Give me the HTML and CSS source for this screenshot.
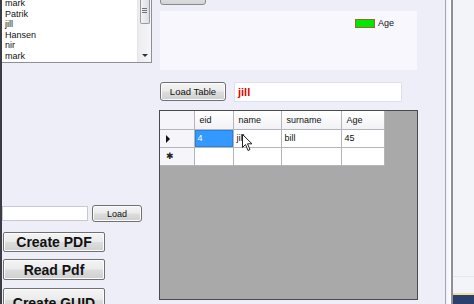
FILE: index.html
```html
<!DOCTYPE html>
<html>
<head>
<meta charset="utf-8">
<link rel="stylesheet" href="styles.css">
</head>
<body>
<div class="edge"></div>
<div class="left">
  <div class="listbox">
    <ul class="items">
      <li>mark</li>
      <li>Patrik</li>
      <li>jill</li>
      <li>Hansen</li>
      <li>nir</li>
      <li>mark</li>
    </ul>
    <div class="vscroll">
      <div class="thumb"><span></span><span></span><span></span></div>
      <div class="arrow-down"></div>
    </div>
  </div>
  <div class="load-row">
    <div class="textbox small"></div>
    <button class="btn load">Load</button>
  </div>
  <button class="btn big first">Create PDF</button>
  <button class="btn big second">Read Pdf</button>
  <button class="btn big third">Create GUID</button>
</div>
<div class="mid">
  <div class="stub"></div>
  <div class="chart">
    <div class="legend"><span class="swatch"></span><span>Age</span></div>
  </div>
  <div class="table-row">
    <button class="btn loadtable">Load Table</button>
    <div class="textbox name">jill</div>
  </div>
  <div class="grid">
    <table>
      <tr class="head">
        <th class="rh"></th><th class="c1">eid</th><th class="c2">name</th><th class="c3">surname</th><th class="c4">Age</th>
      </tr>
      <tr>
        <td class="rh"><span class="tri"></span></td><td class="sel">4</td><td>jill</td><td>bill</td><td>45</td>
      </tr>
      <tr>
        <td class="rh star">&#10033;</td><td></td><td></td><td></td><td></td>
      </tr>
    </table>
    <svg class="cursor" width="12" height="18" viewBox="0 0 12 18">
      <path d="M0.5 0.5 L0.5 13.5 L3.5 10.5 L6 16.5 L8 15.5 L5.5 9.8 L10 9.8 Z" fill="#fff" stroke="#222" stroke-width="1" stroke-linejoin="round"/>
    </svg>
  </div>
</div>
<div class="divider"></div>
<div class="strip">
  <div class="strip-fill"></div>
  <div class="strip-foot"></div>
</div>
</body>
</html>
```
FILE: styles.css
```css
* { box-sizing: border-box; }
html, body { margin: 0; padding: 0; }
body {
  width: 474px;
  height: 304px;
  overflow: hidden;
  display: flex;
  background: #eeeef8;
  font-family: "Liberation Sans", Arial, sans-serif;
  font-size: 9px;
  color: #111;
}
.edge {
  width: 2px;
  flex: none;
  background: #3c3c44;
}
.left {
  width: 150px;
  flex: none;
  display: flex;
  flex-direction: column;
}
.left > * { flex: none; }
.listbox {
  margin-top: -2px;
  height: 65px;
  background: #fff;
  border: 1px solid #8c8f98;
  border-top: none;
  border-left: none;
  display: flex;
}
.items {
  list-style: none;
  margin: 0;
  padding: 0 0 0 3px;
  flex: 1;
}
.items li {
  line-height: 10.5px;
  height: 10.5px;
  font-size: 9px;
  color: #111;
}
.vscroll {
  width: 14px;
  background: linear-gradient(to right, #ececf0, #f6f6f8);
  border-left: 1px solid #e4e4ea;
  position: relative;
  display: flex;
  flex-direction: column;
  align-items: center;
}
.thumb {
  width: 10px;
  height: 26px;
  margin-top: 0;
  border: 1px solid #9a9aa4;
  border-top: none;
  border-radius: 0 0 2px 2px;
  background: linear-gradient(to right, #f4f4f6, #dcdce2);
  display: flex;
  flex-direction: column;
  align-items: center;
  justify-content: center;
  gap: 1px;
}
.thumb span {
  width: 5px;
  height: 1px;
  background: #707078;
}
.arrow-down {
  margin-top: auto;
  margin-bottom: 5px;
  width: 0;
  height: 0;
  border-left: 3px solid transparent;
  border-right: 3px solid transparent;
  border-top: 3px solid #333;
}
.load-row {
  margin-top: 142px;
  height: 17px;
  display: flex;
  align-items: center;
  gap: 4px;
}
.textbox {
  background: #fff;
  border: 1px solid #c8c8d4;
}
.textbox.small {
  width: 86px;
  height: 15px;
}
.btn {
  font-family: "Liberation Sans", Arial, sans-serif;
  color: #111;
  padding: 0;
  border: 1px solid #707070;
  border-radius: 3px;
  background: linear-gradient(to bottom, #f4f4f4 0%, #ebebeb 48%, #dddddd 52%, #cfcfcf 100%);
  box-shadow: inset 0 0 0 1px #fcfcfc;
}
.btn.load {
  width: 50px;
  height: 17px;
  font-size: 9px;
}
.btn.big {
  margin-left: 1px;
  width: 102px;
  font-size: 14px;
  font-weight: bold;
  line-height: 1;
  border-radius: 2px;
}
.btn.first { margin-top: 10px; height: 20px; }
.btn.second { margin-top: 7px; height: 21px; }
.btn.third { margin-top: 8px; height: 24px; padding-top: 5px; }

.mid {
  margin-left: 7px;
  width: 259px;
  flex: none;
  display: flex;
  flex-direction: column;
}
.mid > * { flex: none; }
.stub {
  margin-left: 1px;
  margin-top: -10px;
  width: 46px;
  height: 15px;
  border: 1px solid #8a8a92;
  border-radius: 3px;
  background: linear-gradient(to bottom, #ececec, #d4d4d4);
}
.chart {
  margin-top: 6px;
  margin-left: 1px;
  width: 257px;
  height: 59px;
  background: #f7f7fd;
  display: flex;
  justify-content: flex-end;
}
.legend {
  margin-top: 7px;
  margin-right: 23px;
  display: flex;
  align-items: center;
  gap: 3px;
  height: 10px;
  font-size: 9px;
}
.swatch {
  width: 20px;
  height: 9px;
  background: #00e800;
  border: 1px solid #9a6a2a;
}
.table-row {
  margin-top: 12px;
  margin-left: 1px;
  height: 20px;
  display: flex;
  gap: 8px;
}
.btn.loadtable {
  width: 66px;
  height: 19px;
  font-size: 9.5px;
}
.textbox.name {
  width: 168px;
  height: 20px;
  border-color: #e0e0ea;
  color: #e00000;
  font-weight: bold;
  font-size: 11px;
  line-height: 18px;
  padding-left: 3px;
}
.grid {
  position: relative;
  margin-top: 8px;
  width: 259px;
  height: 190px;
  background: #a9a9a9;
  border: 1px solid #4a4a4a;
}
.grid table {
  border-collapse: collapse;
  font-size: 9px;
}
.grid th, .grid td {
  height: 18px;
  padding: 0 0 0 3px;
  text-align: left;
  font-weight: normal;
  border: 1px solid #b4b4bc;
  background: #fff;
  vertical-align: middle;
}
.grid tr.head th {
  background: linear-gradient(to bottom, #ffffff, #f2f2f6);
  border-top: none;
  padding-left: 5px;
}
.grid .rh {
  width: 34px;
  background: #f6f6fa;
  border-left: none;
  padding-left: 6px;
}
.grid tr.head th.rh { background: #f6f6fa; }
.c1 { width: 39px; }
.c2 { width: 48px; }
.c3 { width: 60px; }
.c4 { width: 43px; }
.grid td.sel {
  background: #3399ff;
  color: #fff;
  box-shadow: inset 0 0 0 1px #2a82e0;
}
.tri {
  display: inline-block;
  width: 0;
  height: 0;
  border-top: 4px solid transparent;
  border-bottom: 4px solid transparent;
  border-left: 4px solid #111;
  vertical-align: middle;
}
.star {
  font-size: 9px;
  color: #222;
}
.cursor {
  position: absolute;
  left: 82px;
  top: 23px;
}
.divider {
  margin-left: 27px;
  width: 8px;
  flex: none;
  border-left: 1px solid #a2a2b0;
  border-right: 2px solid #8e8e9c;
  background: linear-gradient(to right, #f0f0f8, #ffffff);
}
.strip {
  flex: 1;
  display: flex;
  flex-direction: column;
  background: #f3f3fa;
}
.strip-fill {
  flex: 1;
  border-bottom: 1px solid #e6e6ee;
  margin-bottom: 16px;
}
.strip-foot {
  height: 11px;
  flex: none;
  border-top: 2px solid #f0e0a0;
  background: #2c406e;
}
```
